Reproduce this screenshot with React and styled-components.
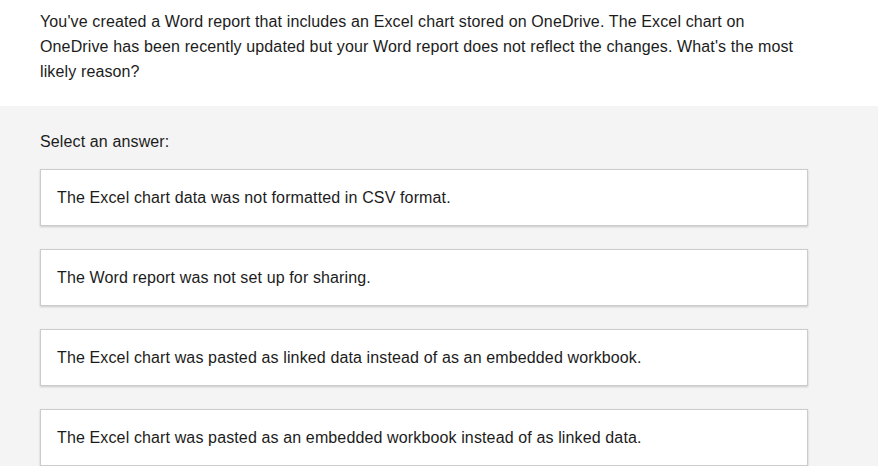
import React from "react";
import styled, { createGlobalStyle } from "styled-components";

const answers = [
  "The Excel chart data was not formatted in CSV format.",
  "The Word report was not set up for sharing.",
  "The Excel chart was pasted as linked data instead of as an embedded workbook.",
  "The Excel chart was pasted as an embedded workbook instead of as linked data.",
];

const App = () => {
  return (
    <Page>
      <GlobalStyle />
      <Question>
        <Inner>
          <QuestionText>
            You've created a Word report that includes an Excel chart stored on
            OneDrive. The Excel chart on OneDrive has been recently updated but
            your Word report does not reflect the changes. What's the most
            likely reason?
          </QuestionText>
        </Inner>
      </Question>
      <Answers>
        <Inner>
          <Prompt>Select an answer:</Prompt>
          <List>
            {answers.map((a) => (
              <Option key={a}>{a}</Option>
            ))}
          </List>
        </Inner>
      </Answers>
    </Page>
  );
};

export default App;

const GlobalStyle = createGlobalStyle`
  html, body {
    margin: 0;
    padding: 0;
    background: #f4f4f4;
  }
  body {
    font-family: "Liberation Sans", Arial, sans-serif;
    letter-spacing: 0.13px;
    color: #1c1c1c;
  }
`;

const Page = styled.div`
  width: 100%;
  min-height: 100vh;
  background: #f4f4f4;
`;

const Inner = styled.div`
  width: 768px;
  padding-left: 40px;
`;

const Question = styled.div`
  background: #ffffff;
  padding: 9px 0 22px;
`;

const QuestionText = styled.p`
  margin: 0;
  font-size: 16px;
  line-height: 25px;
`;

const Answers = styled.div`
  padding: 24px 0 0;
`;

const Prompt = styled.div`
  font-size: 16px;
  line-height: 24px;
`;

const List = styled.div`
  display: flex;
  flex-direction: column;
  gap: 23px;
  margin-top: 15px;
`;

const Option = styled.div`
  box-sizing: border-box;
  height: 57px;
  display: flex;
  align-items: center;
  padding: 0 16px;
  background: #ffffff;
  border: 1px solid #cccccc;
  box-shadow: 0 1px 2px rgba(0, 0, 0, 0.18);
  font-size: 16px;
`;
